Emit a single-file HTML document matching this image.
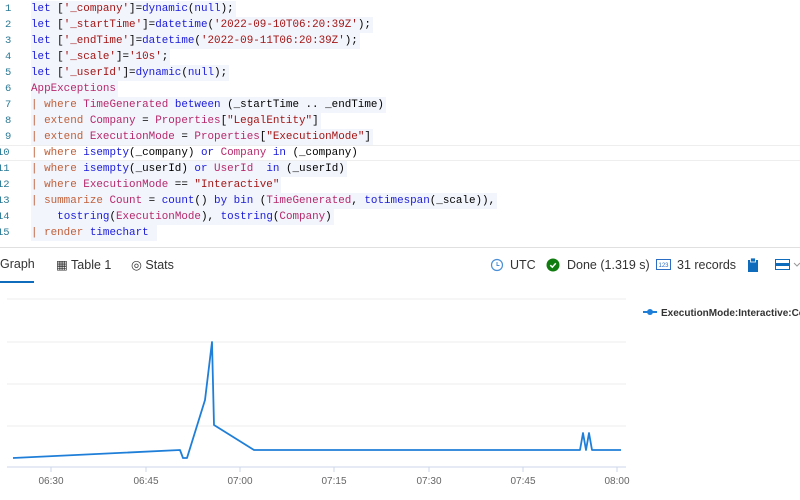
<!DOCTYPE html>
<html><head><style>
body{margin:0;width:800px;height:500px;background:#fff;overflow:hidden;position:relative;font-family:"Liberation Sans",sans-serif}
.code{position:absolute;top:0;left:0;font-family:"Liberation Mono",monospace;font-size:10.9px}
.l{position:absolute;height:16px;line-height:16px;white-space:pre}
.n{position:absolute;left:5px;width:12px;color:#2b7a96;font-size:10.5px}
.t{position:absolute;left:31px;background:#f2f5fc;padding-right:2px}
.k{color:#1a1ad8}.s{color:#a31515}.m{color:#b5286b}.o{color:#c0603a}.p{color:#333}.b{color:#2a55c9}
.tab{position:absolute;top:257px;font-size:12.5px;color:#333}
.r{position:absolute;top:258px;font-size:12.5px;color:#333}
</style></head><body>
<div class="code">
<div class="l" style="top:1px"><span class="n">1</span><span class="t"><span class="k">let</span> [<span class="s">'_company'</span>]=<span class="k">dynamic</span>(<span class="k">null</span>);</span></div>
<div class="l" style="top:17px"><span class="n">2</span><span class="t"><span class="k">let</span> [<span class="s">'_startTime'</span>]=<span class="k">datetime</span>(<span class="s">'2022-09-10T06:20:39Z'</span>);</span></div>
<div class="l" style="top:33px"><span class="n">3</span><span class="t"><span class="k">let</span> [<span class="s">'_endTime'</span>]=<span class="k">datetime</span>(<span class="s">'2022-09-11T06:20:39Z'</span>);</span></div>
<div class="l" style="top:49px"><span class="n">4</span><span class="t"><span class="k">let</span> [<span class="s">'_scale'</span>]=<span class="s">'10s'</span>;</span></div>
<div class="l" style="top:65px"><span class="n">5</span><span class="t"><span class="k">let</span> [<span class="s">'_userId'</span>]=<span class="k">dynamic</span>(<span class="k">null</span>);</span></div>
<div class="l" style="top:81px"><span class="n">6</span><span class="t"><span class="m">AppExceptions</span></span></div>
<div class="l" style="top:97px"><span class="n">7</span><span class="t"><span class="o">| where</span> <span class="m">TimeGenerated</span> <span class="k">between</span> (_startTime .. _endTime)</span></div>
<div class="l" style="top:113px"><span class="n">8</span><span class="t"><span class="o">| extend</span> <span class="m">Company</span> = <span class="m">Properties</span>[<span class="s">"LegalEntity"</span>]</span></div>
<div class="l" style="top:129px"><span class="n">9</span><span class="t"><span class="o">| extend</span> <span class="m">ExecutionMode</span> = <span class="m">Properties</span>[<span class="s">"ExecutionMode"</span>]</span></div>
<div class="l" style="top:145px;left:0;width:800px;border-top:1px solid #eee;border-bottom:1px solid #eee;height:14px;line-height:14px"><span class="n" style="left:-3px">10</span><span class="t" style="background:none"><span class="o">| where</span> <span class="k">isempty</span>(_company) <span class="k">or</span> <span class="m">Company</span> <span class="k">in</span> (_company)</span></div>
<div class="l" style="top:161px"><span class="n" style="left:-3px">11</span><span class="t"><span class="o">| where</span> <span class="k">isempty</span>(_userId) <span class="k">or</span> <span class="m">UserId</span>  <span class="k">in</span> (_userId)</span></div>
<div class="l" style="top:177px"><span class="n" style="left:-3px">12</span><span class="t"><span class="o">| where</span> <span class="m">ExecutionMode</span> == <span class="s">"Interactive"</span></span></div>
<div class="l" style="top:193px"><span class="n" style="left:-3px">13</span><span class="t"><span class="o">| summarize</span> <span class="m">Count</span> = <span class="k">count</span>() <span class="k">by</span> <span class="k">bin</span> (<span class="m">TimeGenerated</span>, <span class="k">totimespan</span>(_scale)),</span></div>
<div class="l" style="top:209px"><span class="n" style="left:-3px">14</span><span class="t">    <span class="k">tostring</span>(<span class="m">ExecutionMode</span>), <span class="k">tostring</span>(<span class="m">Company</span>)</span></div>
<div class="l" style="top:225px"><span class="n" style="left:-3px">15</span><span class="t"><span class="o">| render</span> <span class="k">timechart</span> </span></div>
</div>
<div style="position:absolute;top:247px;left:0;width:800px;height:1px;background:#e0e0e0"></div>
<div class="tab" style="left:0">Graph</div>
<div style="position:absolute;top:281px;left:0;width:34px;height:2px;background:#0f6cbd"></div>
<div class="tab" style="left:56px">&#9638; Table 1</div>
<div class="tab" style="left:131px">&#9678; Stats</div>
<svg style="position:absolute;left:490px;top:258px" width="14" height="14"><circle cx="7" cy="7" r="5.5" fill="none" stroke="#4a8fd6" stroke-width="1.2"/><path d="M7 4v3.5h2.5" stroke="#4a8fd6" fill="none"/></svg>
<div class="r" style="left:510px">UTC</div>
<svg style="position:absolute;left:546px;top:258px" width="14" height="14"><circle cx="7" cy="7" r="6.5" fill="#107c10"/><path d="M4.3 7.2l2 2 3.5-4" stroke="#fff" stroke-width="1.5" fill="none"/></svg>
<div class="r" style="left:567px">Done (1.319 s)</div>
<svg style="position:absolute;left:656px;top:259px" width="15" height="11"><rect x="0.5" y="0.5" width="14" height="10" fill="#fff" stroke="#2b6cc4"/><text x="7.5" y="8" font-size="6" text-anchor="middle" fill="#2b6cc4" font-family="Liberation Sans">123</text></svg>
<div class="r" style="left:677px">31 records</div>
<svg style="position:absolute;left:747px;top:257px" width="12" height="16"><rect x="1" y="3" width="10" height="12" fill="#0f6cbd"/><rect x="3.5" y="1" width="5" height="4" fill="#0f6cbd" stroke="#fff" stroke-width=".8"/></svg>
<svg style="position:absolute;left:775px;top:259px" width="25" height="12"><rect x="0.5" y="0.5" width="14" height="10" fill="none" stroke="#0f6cbd"/><rect x="1" y="4" width="13" height="3" fill="#0f6cbd"/><path d="M19 4l3 3 3-3" stroke="#999" fill="none"/></svg>
<svg style="position:absolute;left:0;top:290px" width="800" height="210">
<g stroke="#ececec" stroke-width="1">
<line x1="7" y1="9" x2="626" y2="9"/><line x1="7" y1="52" x2="626" y2="52"/><line x1="7" y1="94" x2="626" y2="94"/><line x1="7" y1="136" x2="626" y2="136"/>
</g>
<line x1="7" y1="177" x2="626" y2="177" stroke="#ccd6eb"/>
<g stroke="#ccd6eb"><line x1="51" y1="177" x2="51" y2="182"/><line x1="146" y1="177" x2="146" y2="182"/><line x1="240" y1="177" x2="240" y2="182"/><line x1="334" y1="177" x2="334" y2="182"/><line x1="429" y1="177" x2="429" y2="182"/><line x1="523" y1="177" x2="523" y2="182"/><line x1="617" y1="177" x2="617" y2="182"/></g>
<g font-family="Liberation Sans" font-size="10" fill="#666" text-anchor="middle">
<text x="51" y="194">06:30</text><text x="146" y="194">06:45</text><text x="240" y="194">07:00</text><text x="334" y="194">07:15</text><text x="429" y="194">07:30</text><text x="523" y="194">07:45</text><text x="617" y="194">08:00</text></g>
<polyline fill="none" stroke="#1f7fd8" stroke-width="1.8" stroke-linejoin="round" points="13,168 180,160 183,168 187,168 205,110 212,52 214,135 254,160 580,160 583,143 586,160 589,143 592,160 621,160"/>
<line x1="643" y1="22" x2="657" y2="22" stroke="#1f7fd8" stroke-width="2"/><circle cx="650" cy="22" r="3" fill="#1f7fd8"/>
<text x="661" y="26" font-family="Liberation Sans" font-size="10" font-weight="bold" fill="#333">ExecutionMode:Interactive:Co</text>
</svg>
</body></html>
